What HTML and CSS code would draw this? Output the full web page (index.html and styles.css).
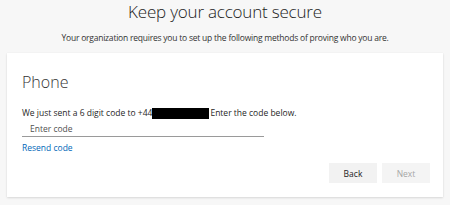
FILE: index.html
```html
<!DOCTYPE html>
<html lang="en">
<head>
<meta charset="utf-8">
<title>Keep your account secure</title>
<link rel="stylesheet" href="styles.css">
</head>
<body>
<div class="page">
  <header class="header">
    <h1 class="title">Keep your account secure</h1>
    <p class="subtitle">Your organization requires you to set up the following methods of proving who you are.</p>
  </header>
  <main class="card">
    <h2 class="card-title">Phone</h2>
    <p class="message">We just sent a 6 digit code to +44<span class="redact"></span>Enter the code below.</p>
    <div class="field"><input class="code-input" type="text" placeholder="Enter code"></div>
    <a class="resend" href="#">Resend code</a>
    <div class="actions">
      <button class="btn btn-back" type="button">Back</button>
      <button class="btn btn-next" type="button" disabled>Next</button>
    </div>
  </main>
</div>
</body>
</html>
```

FILE: styles.css
```css
* { box-sizing: border-box; }
html, body { margin: 0; padding: 0; }
body {
  width: 450px;
  height: 205px;
  background: #f7f7f7;
  font-family: "Open Sans", "Noto Sans", sans-serif;
  color: #262626;
  overflow: hidden;
}
.page {
  display: flex;
  flex-direction: column;
  padding: 0 7px;
}
.header {
  display: flex;
  flex-direction: column;
  align-items: center;
}
.title {
  margin: 0;
  font-size: 17px;
  font-weight: 300;
  letter-spacing: -0.2px;
  line-height: 24px;
  color: #222;
}
.subtitle {
  margin: 8px 0 0;
  font-size: 8.5px;
  letter-spacing: -0.22px;
  line-height: 12px;
  color: #333;
}
.card {
  margin-top: 9px;
  height: 144px;
  background: #fff;
  box-shadow: 0 1px 2px rgba(0,0,0,0.12), 0 0 1px rgba(0,0,0,0.06);
  padding: 19px 13px 0 15px;
  display: flex;
  flex-direction: column;
}
.card-title {
  margin: 0;
  font-size: 16px;
  font-weight: 300;
  line-height: 20px;
  color: #333;
}
.message {
  margin: 15px 0 0;
  font-size: 8.5px;
  line-height: 12px;
  color: #262626;
  display: flex;
  align-items: center;
}
.redact {
  display: inline-block;
  width: 57px;
  height: 11px;
  background: #000;
  margin: 0 1px 0 0;
}
.field {
  margin-top: 1px;
  width: 242px;
  border-bottom: 1px solid #9a9a9a;
}
.code-input {
  display: block;
  width: 100%;
  border: 0;
  outline: 0;
  padding: 2px 8px;
  height: 16px;
  font-family: inherit;
  font-size: 8.5px;
  color: #262626;
  background: transparent;
}
.code-input::placeholder { color: #505050; }
.resend {
  margin-top: 5px;
  align-self: flex-start;
  font-size: 8.5px;
  line-height: 12px;
  color: #0067b8;
  text-decoration: none;
}
.actions {
  margin-top: 9px;
  display: flex;
  justify-content: flex-end;
  gap: 5px;
}
.btn {
  width: 48px;
  height: 20px;
  border: 0;
  padding: 0;
  font-family: inherit;
  font-size: 8.5px;
}
.btn-back { background: #f2f2f2; color: #222; }
.btn-next { background: #f4f4f4; color: #a6a6a6; }
```
